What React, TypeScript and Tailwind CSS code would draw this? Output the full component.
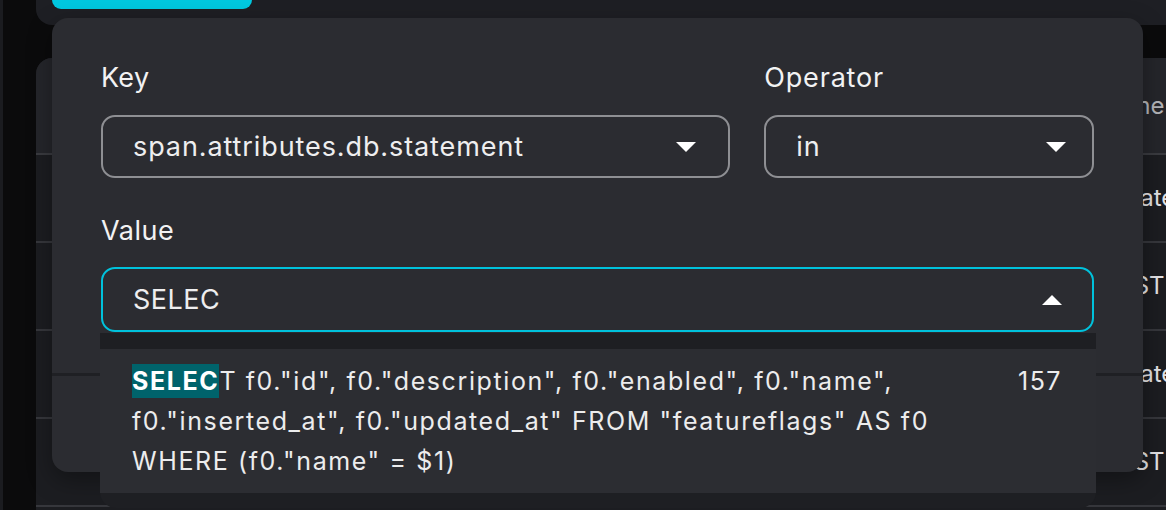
import React from 'react';

/* Filter dialog over a traces table — Key / Operator / Value with suggestion list. */

const FONT = { fontFamily: 'Inter, "Noto Sans", sans-serif' };

const ROWS: { label: string; pad: string }[] = [
  { label: 'Update', pad: 'pl-[1057px]' },
  { label: 'POST', pad: 'pl-[1064px]' },
  { label: 'Update', pad: 'pl-[1057px]' },
  { label: 'POST', pad: 'pl-[1064px]' },
];

function Caret({ up = false }: { up?: boolean }) {
  return (
    <svg width="20" height="10" viewBox="0 0 20 10" aria-hidden>
      {up ? <path d="M10 0 L20 10 L0 10 Z" fill="#ffffff" /> : <path d="M0 0 L20 0 L10 10 Z" fill="#ffffff" />}
    </svg>
  );
}

function Field({
  value,
  className,
  arrowPad,
}: {
  value: string;
  className: string;
  arrowPad: string;
}) {
  return (
    <div
      className={`h-[63px] flex items-center justify-between rounded-[14px] border-2 border-[#8e8f93] pl-[30px] ${arrowPad} ${className}`}
    >
      <span className="text-[27px] tracking-[0.9px] text-[#eeeeef] leading-none">{value}</span>
      <Caret />
    </div>
  );
}

export default function App() {
  return (
    <div
      className="relative w-[1166px] h-[510px] overflow-hidden bg-[#0b0b0c] flex"
      style={FONT}
    >
      {/* left rail */}
      <div className="w-[3px] h-full shrink-0 bg-[#1b1c20]" />
      <div className="w-[33px] h-full shrink-0" />

      {/* background page */}
      <div className="flex-1 min-w-0 overflow-hidden flex flex-col">
        <div className="h-[25px] shrink-0 rounded-bl-[16px] bg-[#1e1f24] pl-[16px]">
          <div className="w-[200px] h-[9px] rounded-b-[12px] bg-[#00c8e0]" />
        </div>
        <div className="h-[33px] shrink-0" />
        <div className="flex-1 rounded-tl-[16px] bg-[#1c1d21] flex flex-col">
          <div className="h-[97px] shrink-0 bg-[#25262b] border-b-2 border-[#3a3b40] flex items-center pl-[1062px] rounded-tl-[16px]">
            <span className="text-[24px] leading-none whitespace-nowrap text-[#b4b5b9]">Name</span>
          </div>
          {ROWS.map((r, i) => (
            <div
              key={i}
              className={`h-[88px] shrink-0 border-b-2 border-[#36373c] flex items-center ${r.pad}`}
            >
              <span className="text-[24px] leading-none whitespace-nowrap text-[#e4e4e6]">{r.label}</span>
            </div>
          ))}
        </div>
      </div>

      {/* dialog */}
      <div className="absolute left-[52px] top-[18px] w-[1091px] h-[454px] rounded-[16px] bg-[#2b2c31] shadow-[0_8px_24px_rgba(0,0,0,0.35)] flex flex-col">
        <div className="pt-[42px] px-[49px]">
          <div className="flex gap-[34px]">
            <div className="w-[630px] flex flex-col">
              <label className="text-[27px] tracking-[0.3px] leading-[36px] text-[#f2f2f3]">Key</label>
              <Field
                value="span.attributes.db.statement"
                className="mt-[19px]"
                arrowPad="pr-[32px]"
              />
            </div>
            <div className="w-[330px] flex flex-col">
              <label className="text-[27px] tracking-[0.8px] leading-[36px] text-[#f2f2f3]">Operator</label>
              <Field value="in" className="mt-[19px]" arrowPad="pr-[26px]" />
            </div>
          </div>

          <label className="block mt-[35px] text-[27px] tracking-[0.5px] leading-[36px] text-[#f2f2f3]">Value</label>
          <div className="mt-[18px] h-[65px] flex items-center justify-between rounded-[14px] border-2 border-[#00c2dc] pl-[30px] pr-[30px]">
            <span className="text-[27px] tracking-[0.5px] text-[#eeeeef] leading-none">SELEC</span>
            <Caret up />
          </div>
        </div>

        <div className="mt-[41px] h-[3px] bg-[#1f2024]" />
        <div className="flex-1" />
      </div>

      {/* suggestions */}
      <div className="absolute left-[100px] top-[333px] w-[996px] h-[175px] rounded-b-[16px] bg-[#1e1f23] pt-[16px]">
        <div className="bg-[#2c2d32] pl-[32px] pr-[34px] pt-[12px] pb-[12px] flex justify-between">
          <p className="text-[25px] tracking-[1.6px] leading-[40px] text-[#ececed] whitespace-nowrap">
            <span className="font-bold text-white bg-[#00636b] py-[2px]">SELEC</span>T f0."id", f0."description", f0."enabled", f0."name",
            <br />
            f0."inserted_at", f0."updated_at" FROM "featureflags" AS f0
            <br />
            WHERE (f0."name" = $1)
          </p>
          <span className="text-[25px] tracking-[1.5px] leading-[40px] text-[#ececed]">157</span>
        </div>
      </div>
    </div>
  );
}
